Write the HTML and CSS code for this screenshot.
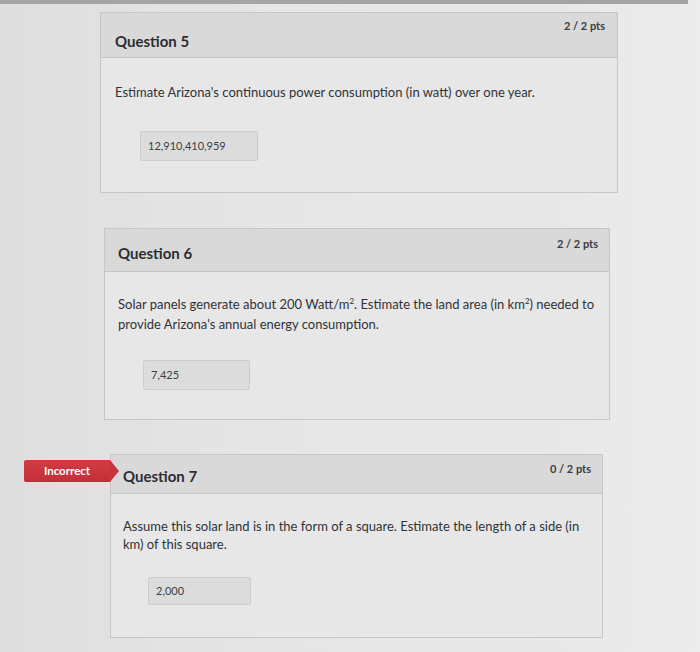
FILE: index.html
```html
<!DOCTYPE html>
<html>
<head>
<meta charset="utf-8">
<link rel="stylesheet" href="styles.css">
</head>
<body>
<div class="topbar"></div>
<main class="quiz">
  <section class="card q5">
    <header class="card-head">
      <h2 class="title">Question 5</h2>
      <span class="pts">2 / 2 pts</span>
    </header>
    <div class="card-body">
      <p class="text">Estimate Arizona's continuous power consumption (in watt) over one year.</p>
      <div class="answer">12,910,410,959</div>
    </div>
  </section>

  <section class="card q6">
    <header class="card-head">
      <h2 class="title">Question 6</h2>
      <span class="pts">2 / 2 pts</span>
    </header>
    <div class="card-body">
      <p class="text">Solar panels generate about 200 Watt/m<sup>2</sup>. Estimate the land area (in km<sup>2</sup>) needed to<br>provide Arizona's annual energy consumption.</p>
      <div class="answer">7,425</div>
    </div>
  </section>

  <section class="card q7">
    <div class="badge">Incorrect</div>
    <header class="card-head">
      <h2 class="title">Question 7</h2>
      <span class="pts">0 / 2 pts</span>
    </header>
    <div class="card-body">
      <p class="text">Assume this solar land is in the form of a square. Estimate the length of a side (in<br>km) of this square.</p>
      <div class="answer">2,000</div>
    </div>
  </section>
</main>
</body>
</html>
```

FILE: styles.css
```css
html, body {
  margin: 0;
  padding: 0;
}
body {
  width: 700px;
  height: 652px;
  overflow: hidden;
  background: linear-gradient(90deg, #dedede 0%, #e6e6e6 40%, #e8e8e8 80%, #ececec 100%);
  font-family: Lato, "Liberation Sans", sans-serif;
  color: #2f3338;
}
.topbar {
  height: 4px;
  width: 688px;
  background: #a3a4a6;
}
.quiz {
  display: flex;
  flex-direction: column;
  gap: 35px;
  padding-top: 8px;
}
.card {
  position: relative;
  border: 1px solid #c6c6c6;
  background: #e7e7e7;
  box-sizing: border-box;
}
.q5 { margin-left: 100px; width: 518px; }
.q6 { margin-left: 104px; width: 506px; }
.q7 { margin-left: 110px; width: 493px; margin-top: -1px; }

.card-head {
  display: flex;
  justify-content: space-between;
  align-items: flex-start;
  background: #d9d9d9;
  border-bottom: 1px solid #c4c4c4;
  box-sizing: border-box;
}
.q5 .card-head { height: 45px; padding: 0 12px 0 14px; }
.q6 .card-head { height: 43px; padding: 0 11px 0 13px; }
.q7 .card-head { height: 39px; padding: 0 11px 0 12px; }

.title {
  margin: 0;
  font-size: 15px;
  font-weight: 700;
  color: #2b2e33;
  line-height: 18px;
}
.q5 .title { padding-top: 19px; }
.q6 .title { padding-top: 15px; }
.q7 .title { padding-top: 12px; }

.pts {
  font-size: 11px;
  font-weight: 700;
  color: #3a3d42;
  line-height: 14px;
}
.q5 .pts { padding-top: 6px; }
.q6 .pts { padding-top: 8px; }
.q7 .pts { padding-top: 7px; }

.card-body {
  box-sizing: border-box;
}
.q5 .card-body { height: 134px; padding: 24px 14px 0 14px; }
.q6 .card-body { height: 147px; padding: 22px 13px 0 13px; }
.q7 .card-body { height: 143px; padding: 23px 12px 0 12px; }

.text {
  margin: 0;
  font-size: 13px;
  line-height: 20px;
  color: #2f3338;
}
.q7 .text { line-height: 18px; }
.text sup {
  font-size: 8px;
  line-height: 0;
}

.answer {
  box-sizing: border-box;
  height: 30px;
  background: #dcdcdc;
  border: 1px solid #cdcdcd;
  border-radius: 2px;
  font-size: 11px;
  line-height: 28px;
  padding-left: 7px;
  color: #3b3e42;
}
.q5 .answer { width: 118px; margin: 29px 0 0 25px; }
.q6 .answer { width: 107px; margin: 26px 0 0 25px; }
.q7 .answer { width: 103px; margin: 24px 0 0 25px; height: 28px; line-height: 26px; }

.badge {
  position: absolute;
  left: -87px;
  top: 5px;
  width: 86px;
  height: 22px;
  background: linear-gradient(180deg, #d13c43 0%, #c22f37 100%);
  color: #fff;
  font-size: 11.5px;
  font-weight: 700;
  line-height: 22px;
  text-align: center;
  border-radius: 2px 0 0 2px;
}
.badge::after {
  content: "";
  position: absolute;
  right: -9px;
  top: 0;
  border-top: 11px solid transparent;
  border-bottom: 11px solid transparent;
  border-left: 9px solid #c8343c;
}
```
